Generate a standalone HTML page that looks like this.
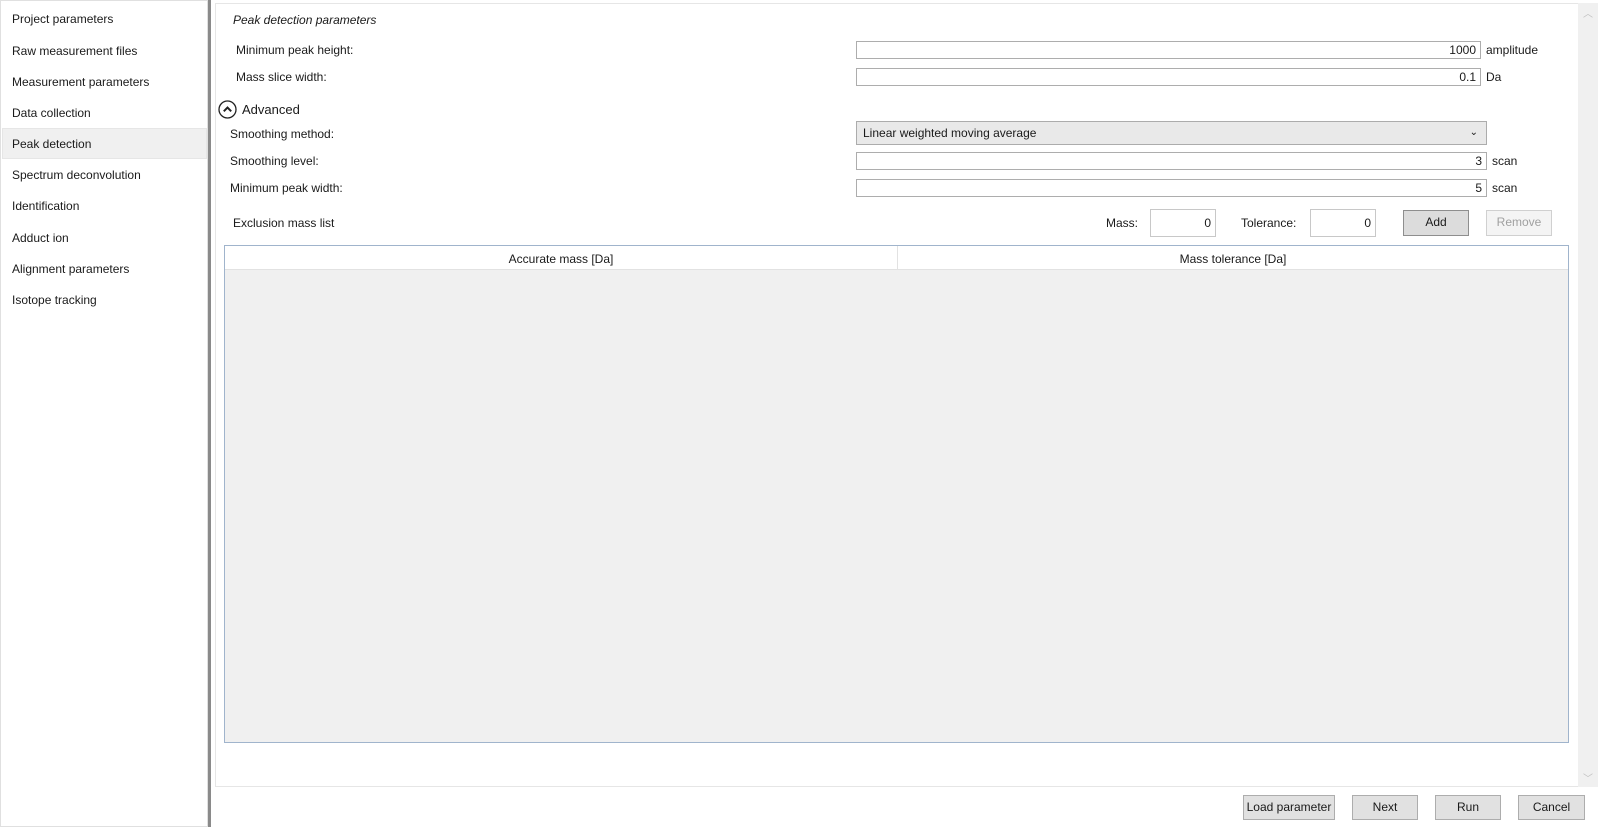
<!DOCTYPE html>
<html><head><meta charset="utf-8"><style>
*{box-sizing:border-box;margin:0;padding:0}
body{width:1600px;height:827px;position:relative;background:#fff;font-family:"Liberation Sans",sans-serif;font-size:12px;color:#1a1a1a;overflow:hidden}
.a{position:absolute;white-space:nowrap}
.left{position:absolute;left:0;top:0;width:208px;height:827px;border:1px solid #e0e0e0;background:#fff}
.split{position:absolute;left:208px;top:0;width:3px;height:827px;background:#8a8a8a}
.main{position:absolute;left:215px;top:3px;width:1364px;height:784px;border:1px solid #e6e6e6;border-right:none}
.nav{position:absolute;left:12px;line-height:14px}
.inp{position:absolute;border:1px solid #adadad;background:#fff;text-align:right;padding-right:4px;line-height:16px}
.btn{position:absolute;border:1px solid #adadad;background:#e1e1e1;text-align:center;line-height:23px}
</style></head><body>
<div class="left"></div>
<div class="a" style="left:2px;top:128px;width:205px;height:31px;background:#f0f0f0;border:1px solid #e6e6e6"></div>
<div class="nav" style="top:12px">Project parameters</div>
<div class="nav" style="top:44px">Raw measurement files</div>
<div class="nav" style="top:75px">Measurement parameters</div>
<div class="nav" style="top:106px">Data collection</div>
<div class="nav" style="top:137px">Peak detection</div>
<div class="nav" style="top:168px">Spectrum deconvolution</div>
<div class="nav" style="top:199px">Identification</div>
<div class="nav" style="top:231px">Adduct ion</div>
<div class="nav" style="top:262px">Alignment parameters</div>
<div class="nav" style="top:293px">Isotope tracking</div>
<div class="split"></div>
<div class="main"></div>
<div class="a" style="left:1578px;top:3px;width:20px;height:784px;background:#f0f0f0"></div>
<div class="a" style="left:1583px;top:5px;color:#c0c0c0;font-size:10px">︿</div>
<div class="a" style="left:1583px;top:770px;color:#c0c0c0;font-size:10px">﹀</div>

<div class="a" style="left:233px;top:13px;font-style:italic">Peak detection parameters</div>
<div class="a" style="left:236px;top:43px">Minimum peak height:</div>
<div class="inp" style="left:856px;top:41px;width:625px;height:18px">1000</div>
<div class="a" style="left:1486px;top:43px">amplitude</div>
<div class="a" style="left:236px;top:70px">Mass slice width:</div>
<div class="inp" style="left:856px;top:68px;width:625px;height:18px">0.1</div>
<div class="a" style="left:1486px;top:70px">Da</div>

<svg class="a" style="left:218px;top:100px" width="19" height="19" viewBox="0 0 19 19"><circle cx="9.5" cy="9.5" r="8.5" fill="none" stroke="#222" stroke-width="1.3"/><path d="M5.8 11.3 L9.5 7.6 L13.2 11.3" fill="none" stroke="#222" stroke-width="2"/></svg>
<div class="a" style="left:242px;top:102px;font-size:13px">Advanced</div>
<div class="a" style="left:230px;top:127px">Smoothing method:</div>
<div class="a" style="left:856px;top:121px;width:631px;height:24px;border:1px solid #acacac;background:#e9e9e9;padding-left:6px;line-height:22px">Linear weighted moving average<span style="position:absolute;right:8px;top:0;font-size:10px">&#8964;</span></div>
<div class="a" style="left:230px;top:154px">Smoothing level:</div>
<div class="inp" style="left:856px;top:152px;width:631px;height:18px">3</div>
<div class="a" style="left:1492px;top:154px">scan</div>
<div class="a" style="left:230px;top:181px">Minimum peak width:</div>
<div class="inp" style="left:856px;top:179px;width:631px;height:18px">5</div>
<div class="a" style="left:1492px;top:181px">scan</div>

<div class="a" style="left:233px;top:216px">Exclusion mass list</div>
<div class="a" style="left:1106px;top:216px">Mass:</div>
<div class="inp" style="left:1150px;top:209px;width:66px;height:28px;border-color:#c8c8c8;line-height:26px">0</div>
<div class="a" style="left:1241px;top:216px">Tolerance:</div>
<div class="inp" style="left:1310px;top:209px;width:66px;height:28px;border-color:#c8c8c8;line-height:26px">0</div>
<div class="btn" style="left:1403px;top:210px;width:66px;height:26px;background:#dcdcdc;border-color:#8e8e8e">Add</div>
<div class="btn" style="left:1486px;top:210px;width:66px;height:26px;background:#f4f4f4;border-color:#d0d0d0;color:#a0a0a0">Remove</div>

<div class="a" style="left:224px;top:245px;width:1345px;height:498px;border:1px solid #a0b4cc;background:#f0f0f0"></div>
<div class="a" style="left:225px;top:246px;width:1343px;height:24px;background:#fff;border-bottom:1px solid #e2e2e2"></div>
<div class="a" style="left:897px;top:246px;width:1px;height:24px;background:#e2e2e2"></div>
<div class="a" style="left:225px;top:252px;width:672px;text-align:center">Accurate mass [Da]</div>
<div class="a" style="left:898px;top:252px;width:670px;text-align:center">Mass tolerance [Da]</div>

<div class="btn" style="left:1243px;top:795px;width:92px;height:25px">Load parameter</div>
<div class="btn" style="left:1352px;top:795px;width:66px;height:25px">Next</div>
<div class="btn" style="left:1435px;top:795px;width:66px;height:25px">Run</div>
<div class="btn" style="left:1518px;top:795px;width:67px;height:25px">Cancel</div>
</body></html>
